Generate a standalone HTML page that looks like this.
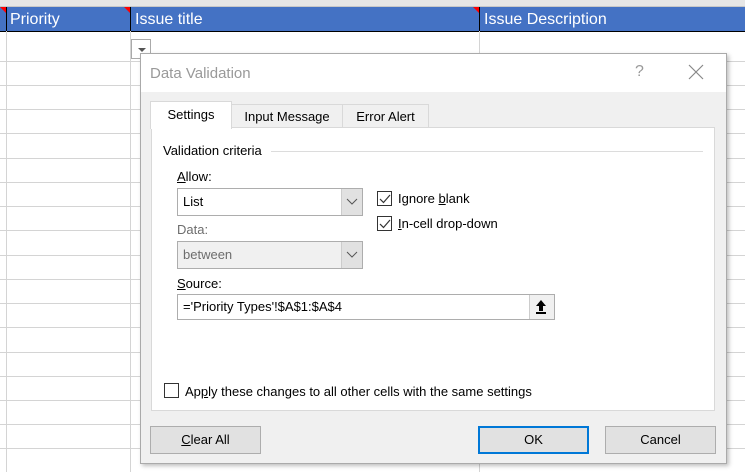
<!DOCTYPE html>
<html><head><style>
*{margin:0;padding:0;box-sizing:border-box}
body{width:745px;height:472px;overflow:hidden;background:#fff;font-family:"Liberation Sans",sans-serif;font-size:13px;color:#000;position:relative}
.a{position:absolute}
.hl{position:absolute;left:0;width:745px;height:1px;background:#d4d4d4}
.vl{position:absolute;top:31px;width:1px;height:441px;background:#d4d4d4}
.btn{position:absolute;height:28px;background:#e1e1e1;border:1px solid #adadad;text-align:center;line-height:26px}
.cb{position:absolute;width:15px;height:15px;border:1px solid #333;background:#fff}
u{text-decoration:underline}
</style></head><body>
<div class="a" style="left:0;top:0;width:745px;height:7px;background:#e6e6e6;border-bottom:1px solid #c8c8c8"></div>
<div class="a" style="left:0;top:7px;width:745px;height:25px;background:#4472c4;border-bottom:1px solid #000"></div>
<div class="a" style="left:6px;top:7px;width:1px;height:24px;background:#000"></div>
<div class="a" style="left:130px;top:7px;width:1px;height:24px;background:#000"></div>
<div class="a" style="left:479px;top:7px;width:1px;height:24px;background:#000"></div>
<div class="a" style="left:124px;top:7px;width:0;height:0;border-left:6px solid transparent;border-top:6px solid #f00"></div>
<div class="a" style="left:473px;top:7px;width:0;height:0;border-left:6px solid transparent;border-top:6px solid #f00"></div>
<div class="a" style="left:0;top:7px;width:0;height:0;border-left:6px solid transparent;border-top:6px solid #f00"></div>
<div class="a" style="left:10px;top:11px;color:#fff;font-size:16px">Priority</div>
<div class="a" style="left:135px;top:11px;color:#fff;font-size:16px">Issue title</div>
<div class="a" style="left:484px;top:11px;color:#fff;font-size:16px">Issue Description</div>
<div class="vl" style="left:6px"></div><div class="vl" style="left:130px"></div><div class="vl" style="left:479px"></div>
<div class="hl" style="top:61px"></div><div class="hl" style="top:85px"></div><div class="hl" style="top:109px"></div><div class="hl" style="top:133px"></div><div class="hl" style="top:158px"></div><div class="hl" style="top:182px"></div><div class="hl" style="top:206px"></div><div class="hl" style="top:230px"></div><div class="hl" style="top:255px"></div><div class="hl" style="top:279px"></div><div class="hl" style="top:303px"></div><div class="hl" style="top:327px"></div><div class="hl" style="top:352px"></div><div class="hl" style="top:376px"></div><div class="hl" style="top:400px"></div><div class="hl" style="top:424px"></div><div class="hl" style="top:448px"></div>
<div class="a" style="left:131px;top:39px;width:20px;height:20px;border:1px solid #aaa;background:#fff"><div class="a" style="left:6px;top:8px;border-left:4px solid transparent;border-right:4px solid transparent;border-top:4px solid #555"></div></div>
<div class="a" style="left:140px;top:53px;width:587px;height:411px;background:#f0f0f0;border:1px solid #aaa;box-shadow:2px 2px 4px rgba(0,0,0,.25)">
<div class="a" style="left:0;top:0;width:585px;height:38px;background:#fff"></div>
<div class="a" style="left:9px;top:11px;font-size:15px;color:#999">Data Validation</div>
<div class="a" style="left:494px;top:9px;font-size:16px;color:#999">?</div>
<svg class="a" style="left:547px;top:10px" width="16" height="16"><path d="M1 1L15 15M15 1L1 15" stroke="#888" stroke-width="1.2"/></svg>
<div class="a" style="left:10px;top:73px;width:564px;height:284px;background:#fff;border:1px solid #d9d9d9"></div>
<div class="a" style="left:90px;top:50px;width:112px;height:24px;background:#f0f0f0;border:1px solid #d9d9d9;text-align:center;line-height:24px">Input Message</div>
<div class="a" style="left:201px;top:50px;width:87px;height:24px;background:#f0f0f0;border:1px solid #d9d9d9;text-align:center;line-height:24px">Error Alert</div>
<div class="a" style="left:9px;top:47px;width:82px;height:28px;background:#fff;border:1px solid #d9d9d9;border-bottom:none;text-align:center;line-height:26px">Settings</div>
<div class="a" style="left:22px;top:89px">Validation criteria</div>
<div class="a" style="left:130px;top:97px;width:432px;height:1px;background:#dcdcdc"></div>
<div class="a" style="left:36px;top:115px"><u>A</u>llow:</div>
<div class="a" style="left:36px;top:134px;width:186px;height:28px;border:1px solid #adadad;background:#fff;padding-left:5px;line-height:26px">List</div>
<div class="a" style="left:200px;top:135px;width:21px;height:26px;background:#e1e1e1;border-left:1px solid #ccc"></div>
<svg class="a" style="left:205px;top:144px" width="12" height="8"><path d="M1 1L6 6L11 1" stroke="#555" fill="none"/></svg>
<div class="a" style="left:36px;top:168px;color:#6d6d6d">Data:</div>
<div class="a" style="left:36px;top:187px;width:186px;height:28px;border:1px solid #adadad;background:#f0f0f0;padding-left:5px;line-height:26px;color:#6d6d6d">between</div>
<div class="a" style="left:200px;top:188px;width:21px;height:26px;background:#e1e1e1;border-left:1px solid #ccc"></div>
<svg class="a" style="left:205px;top:197px" width="12" height="8"><path d="M1 1L6 6L11 1" stroke="#555" fill="none"/></svg>
<div class="a" style="left:36px;top:222px"><u>S</u>ource:</div>
<div class="a" style="left:36px;top:240px;width:378px;height:26px;border:1px solid #adadad;background:#fff;padding-left:5px;line-height:24px">='Priority Types'!$A$1:$A$4</div>
<div class="a" style="left:388px;top:241px;width:25px;height:24px;background:#f0f0f0;border-left:1px solid #ccc"></div>
<svg class="a" style="left:394px;top:245px" width="12" height="16"><path d="M6 1L1 7H4V12H8V7H11Z" fill="#000"/><rect x="1" y="13" width="10" height="2" fill="#000"/></svg>
<div class="cb" style="left:236px;top:137px"></div>
<svg class="a" style="left:238px;top:140px" width="12" height="10"><path d="M1 5L4.5 8.5L11 1" stroke="#333" fill="none" stroke-width="1.2"/></svg>
<div class="a" style="left:257px;top:137px">Ignore <u>b</u>lank</div>
<div class="cb" style="left:236px;top:162px"></div>
<svg class="a" style="left:238px;top:165px" width="12" height="10"><path d="M1 5L4.5 8.5L11 1" stroke="#333" fill="none" stroke-width="1.2"/></svg>
<div class="a" style="left:257px;top:162px"><u>I</u>n-cell drop-down</div>
<div class="cb" style="left:23px;top:329px"></div>
<div class="a" style="left:44px;top:330px">Ap<u>p</u>ly these changes to all other cells with the same settings</div>
<div class="btn" style="left:9px;top:372px;width:111px"><u>C</u>lear All</div>
<div class="btn" style="left:337px;top:372px;width:111px;border:2px solid #0078d7;line-height:24px">OK</div>
<div class="btn" style="left:464px;top:372px;width:111px">Cancel</div>
</div>
</body></html>
